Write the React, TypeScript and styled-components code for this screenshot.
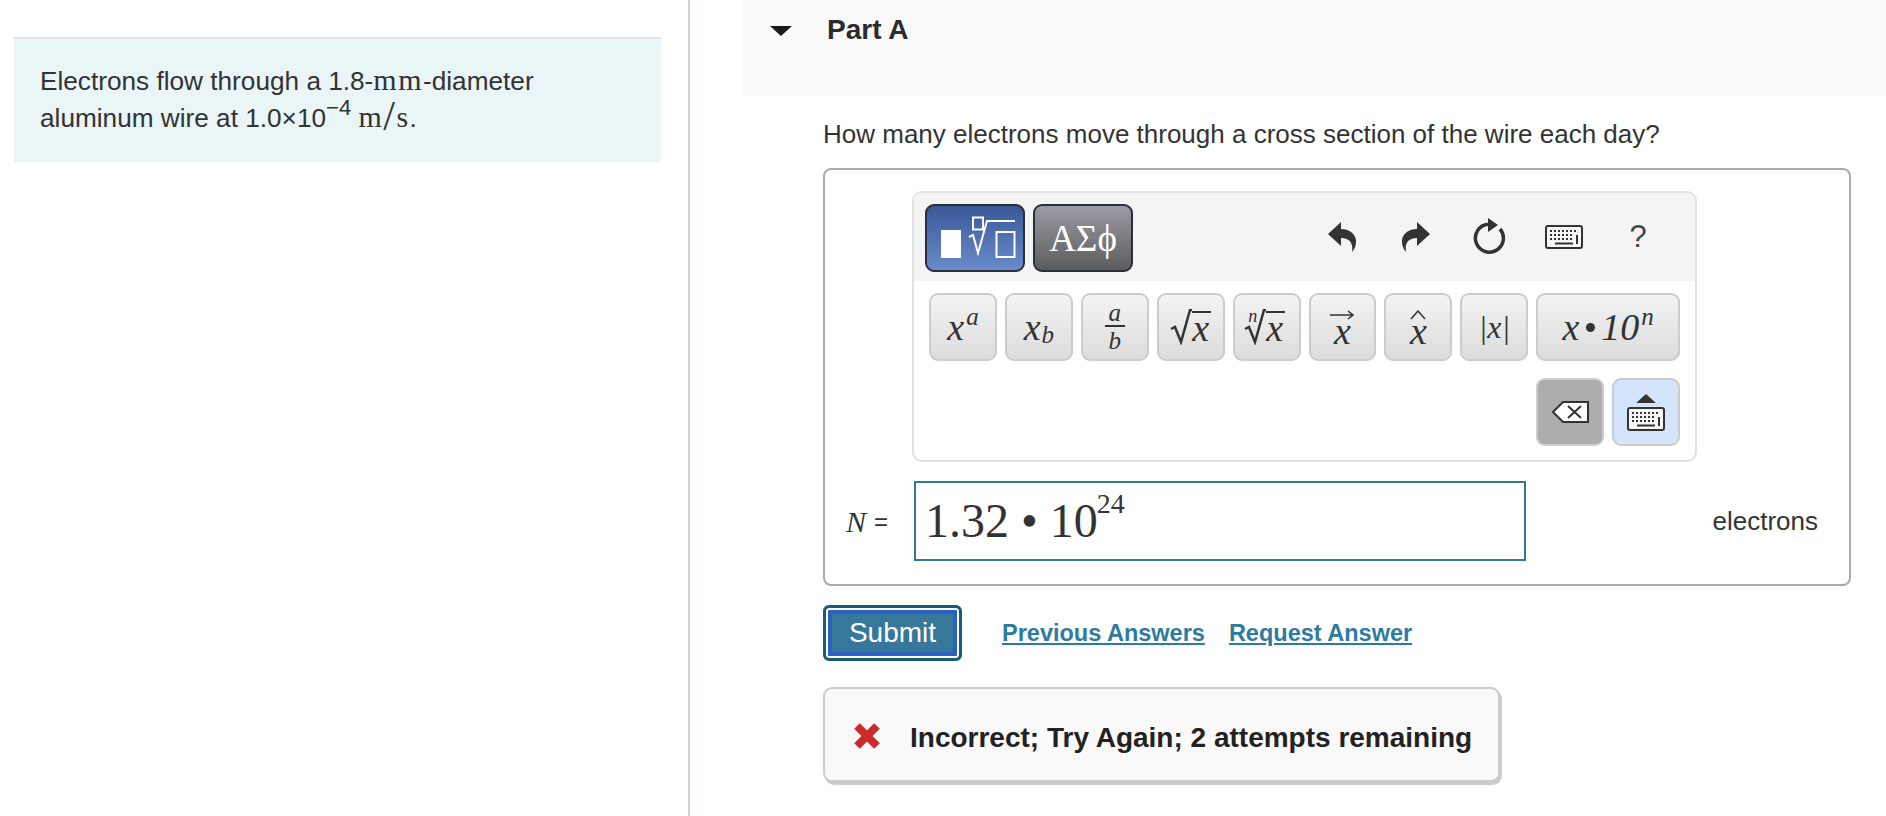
import React from "react";
import styled, { createGlobalStyle } from "styled-components";

const GlobalStyle = createGlobalStyle`
  html, body {
    margin: 0;
    padding: 0;
    background: #fff;
    font-family: "Liberation Sans", Arial, sans-serif;
    color: #333;
  }
  * { box-sizing: border-box; }
`;

const serif = `"Liberation Serif", "Times New Roman", serif`;

const Page = styled.div`
  display: flex;
  width: 1886px;
  height: 816px;
  overflow: hidden;
`;

const LeftColumn = styled.aside`
  width: 690px;
  flex: none;
  padding: 37px 27px 0 14px;
  border-right: 2px solid #c6d2e0;
`;

const ProblemBox = styled.div`
  height: 125px;
  padding: 24px 20px 0 26px;
  background: #e9f5f7;
  border-top: 2px solid #dde3e6;
  font-size: 26.2px;
  line-height: 37px;
  color: #333;
`;

const MathRoman = styled.span`
  font-family: ${serif};
  font-size: 30px;
  letter-spacing: 1.5px;
  line-height: 0;
`;

const Slash = styled.span`
  font-size: 42px;
  font-weight: 100;
  line-height: 0;
  vertical-align: -3px;
`;

const Exponent = styled.sup`
  font-size: 22px;
  line-height: 0;
  vertical-align: 12px;
`;

const RightColumn = styled.main`
  flex: 1;
  padding-left: 52px;
`;

const PartHeader = styled.header`
  display: flex;
  align-items: flex-start;
  height: 96px;
  background: #f9f9f9;
  padding: 15px 0 0 28px;
`;

const Caret = styled.span`
  width: 0;
  height: 0;
  margin-top: 11px;
  border-left: 11px solid transparent;
  border-right: 11px solid transparent;
  border-top: 10px solid #1a1a1a;
`;

const PartTitle = styled.h2`
  margin: 0 0 0 35px;
  font-size: 28px;
  line-height: 30px;
  font-weight: 700;
  color: #2b2b2b;
`;

const Body = styled.div`
  padding: 22px 35px 0 81px;
`;

const Question = styled.p`
  margin: 0 0 18px;
  font-size: 26px;
  line-height: 32px;
  color: #333;
`;

const AnswerBox = styled.section`
  height: 418px;
  padding: 21px 29px 0 87px;
  border: 2px solid #aaa;
  border-radius: 8px;
`;

const Toolbar = styled.div`
  width: 785px;
  height: 271px;
  border: 2px solid #e1e1e1;
  border-radius: 10px;
  overflow: hidden;
`;

const ToolbarTop = styled.div`
  display: flex;
  align-items: flex-start;
  height: 88px;
  padding: 11px 20px 0 11px;
  background: #f4f4f4;
`;

const ModeButton = styled.div<{ $active?: boolean }>`
  display: flex;
  align-items: center;
  justify-content: center;
  width: 100px;
  height: 68px;
  margin-right: 8px;
  border: 2px solid #2a2f38;
  border-radius: 9px;
  background: ${({ $active }) =>
    $active
      ? "linear-gradient(#3a5898, #6a8bcb)"
      : "linear-gradient(#9b9ba4, #5c5c5c)"};
  color: #fff;
  font-family: ${serif};
  font-size: 37px;
`;

const ToolIcons = styled.div`
  display: flex;
  margin: 13px 0 0 auto;
`;

const ToolIcon = styled.span<{ $size?: number }>`
  display: flex;
  align-items: center;
  justify-content: center;
  width: 74px;
  height: 40px;
  color: #444;
  font-size: ${({ $size }) => $size ?? 30}px;
`;

const ArrowSvg = styled.svg<{ $flip?: boolean }>`
  transform: ${({ $flip }) => ($flip ? "scaleX(-1)" : "none")};
`;

const Keys = styled.div`
  padding: 12px 15px 0;
`;

const KeyRow = styled.div<{ $end?: boolean }>`
  display: flex;
  gap: 8px;
  justify-content: ${({ $end }) => ($end ? "flex-end" : "flex-start")};
  margin-bottom: 17px;
`;

const Key = styled.div<{ $wide?: boolean; $tone?: "plain" | "dark" | "blue" }>`
  display: flex;
  align-items: center;
  justify-content: center;
  width: ${({ $wide }) => ($wide ? 144 : 68)}px;
  height: 68px;
  border: 2px solid #ccc;
  border-radius: 9px;
  background: ${({ $tone }) =>
    $tone === "dark"
      ? "#adadad"
      : $tone === "blue"
        ? "#d3e4fb"
        : "linear-gradient(#f3f3f3, #dcdcdc)"};
  color: #333;
  font-family: ${serif};
  font-size: 38px;
  font-style: italic;
`;

const KeySup = styled.span`
  font-size: 25px;
  transform: translateY(-10px);
  margin-left: 2px;
`;

const KeySub = styled.span`
  font-size: 25px;
  transform: translateY(8px);
  margin-left: 1px;
`;

const Fraction = styled.div`
  display: flex;
  flex-direction: column;
  align-items: center;
  font-size: 25px;
  line-height: 22px;
`;

const FractionBar = styled.span`
  width: 20px;
  height: 2px;
  margin: 1px 0 3px;
  background: #333;
`;

const RootText = styled.span`
  border-top: 2px solid #333;
  font-size: 38px;
  line-height: 30px;
  height: 31px;
  padding: 0 2px 0 0;
  margin-top: -1px;
`;

const RootIndex = styled.span`
  font-size: 18px;
  line-height: 16px;
  margin-right: -13px;
  transform: translateY(-11px);
`;

const Accented = styled.div`
  display: flex;
  flex-direction: column;
  align-items: center;
  line-height: 26px;
`;

const AccentSvg = styled.svg`
  display: block;
  margin-bottom: -2px;
`;

const AbsText = styled.span`
  font-size: 32px;
`;

const Dot = styled.span`
  width: 9px;
  height: 9px;
  margin: 0 6px 0 7px;
  border-radius: 50%;
  background: #333;
`;

const Stack = styled.div`
  display: flex;
  flex-direction: column;
  align-items: center;
  gap: 4px;
`;

const InputRow = styled.div`
  display: flex;
  align-items: center;
  margin: 19px -29px 0 -87px;
  padding: 0 31px 0 21px;
`;

const VarLabel = styled.span`
  display: flex;
  align-items: center;
  gap: 8px;
  width: 68px;
  padding-top: 2px;
  font-size: 24px;
`;

const VarName = styled.span`
  font-family: ${serif};
  font-style: italic;
  font-size: 30px;
`;

const MathInput = styled.div`
  width: 612px;
  height: 80px;
  padding: 0 0 0 9px;
  border: 2px solid #37789a;
  font-family: ${serif};
  font-size: 48px;
  line-height: 76px;
  color: #333;
`;

const InputSup = styled.sup`
  font-size: 28px;
  line-height: 0;
  vertical-align: 24px;
  margin-left: -1px;
`;

const Units = styled.span`
  margin-left: auto;
  font-size: 26px;
  color: #333;
`;

const ActionRow = styled.div`
  display: flex;
  align-items: center;
  margin-top: 19px;
`;

const SubmitButton = styled.button`
  width: 139px;
  height: 56px;
  padding: 0;
  border: 3px solid #1d5a78;
  border-radius: 6px;
  background: #37789a;
  box-shadow: inset 0 0 0 2px #fff, inset 0 0 0 6px #2a5fc4;
  color: #fff;
  font-family: inherit;
  font-size: 28px;
`;

const Links = styled.div`
  display: flex;
  gap: 24px;
  margin-left: 40px;
`;

const ActionLink = styled.a`
  font-size: 23.5px;
  font-weight: 700;
  color: #2f7aa0;
  text-decoration: underline;
`;

const Feedback = styled.div`
  display: flex;
  align-items: center;
  width: 677px;
  height: 95px;
  margin-top: 26px;
  padding-left: 27px;
  background: #f9f9f9;
  border: 2px solid #ccc;
  border-radius: 9px;
  box-shadow: 2px 3px 0 #ccc;
`;

const FeedbackIcon = styled.svg`
  margin-top: 2px;
`;

const FeedbackText = styled.strong`
  margin-left: 28px;
  padding-top: 6px;
  font-size: 28px;
  color: #222;
`;

const Radical = ({ width = 22 }: { width?: number }) => (
  <svg width={width} height="36" viewBox="0 0 22 36" fill="none" stroke="#333">
    <path d="M1 20 L5 18 L11 33 L20 1 L22 1" strokeWidth="2.500" />
  </svg>
);

const Keyboard = ({ width = 38 }: { width?: number }) => (
  <svg width={width} height={(width * 24) / 38} viewBox="0 0 38 24">
    <rect x="1" y="1" width="36" height="22" rx="2" fill="#f6f6f6" stroke="#333" strokeWidth="2" />
    <path
      d="M5 6h28M5 10h24M5 14h24"
      stroke="#333"
      strokeWidth="2"
      strokeDasharray="2 2"
      fill="none"
    />
    <path d="M10 18.500h18" stroke="#333" strokeWidth="2" />
    <path d="M31 10h2v9h-2z" fill="#333" />
  </svg>
);

const ReplyArrow = ({ flip }: { flip?: boolean }) => (
  <ArrowSvg $flip={flip} width="28" height="32" viewBox="0 0 28 32" fill="#333">
    <path d="M0 13 L13 1 V8 C22 8 29 14 28 22 C27.500 26 26 29 24 31 C25 25 24 17 13 17 V25 Z" />
  </ArrowSvg>
);

const App = () => (
  <>
    <GlobalStyle />
    <Page>
      <LeftColumn>
        <ProblemBox>
          Electrons flow through a 1.8-<MathRoman>mm</MathRoman>-diameter
          <br />
          aluminum wire at 1.0×10<Exponent>−4</Exponent>{" "}
          <MathRoman>
            m<Slash>/</Slash>s
          </MathRoman>
          .
        </ProblemBox>
      </LeftColumn>
      <RightColumn>
        <PartHeader>
          <Caret />
          <PartTitle>Part A</PartTitle>
        </PartHeader>
        <Body>
          <Question>
            How many electrons move through a cross section of the wire each day?
          </Question>
          <AnswerBox>
            <Toolbar>
              <ToolbarTop>
                <ModeButton $active>
                  <svg width="96" height="64" viewBox="0 0 96 64" fill="none">
                    <rect x="14" y="24" width="20" height="28" fill="#fff" />
                    <rect x="46" y="11.500" width="10" height="12" stroke="#fff" strokeWidth="2" />
                    <path d="M42 31 L46 29 L51 47 L60 15 L88 15" stroke="#fff" strokeWidth="2" />
                    <rect x="69.500" y="26" width="18" height="25" stroke="#fff" strokeWidth="2" />
                  </svg>
                </ModeButton>
                <ModeButton>ΑΣϕ</ModeButton>
                <ToolIcons>
                  <ToolIcon>
                    <ReplyArrow />
                  </ToolIcon>
                  <ToolIcon>
                    <ReplyArrow flip />
                  </ToolIcon>
                  <ToolIcon>
                    <svg width="34" height="38" viewBox="0 0 34 38" fill="none">
                      <path d="M27 11 A14 14 0 1 1 15 6.200" stroke="#333" strokeWidth="3.500" />
                      <path d="M15 0 L25 7 L15 14 Z" fill="#333" />
                    </svg>
                  </ToolIcon>
                  <ToolIcon>
                    <Keyboard />
                  </ToolIcon>
                  <ToolIcon $size={31}>?</ToolIcon>
                </ToolIcons>
              </ToolbarTop>
              <Keys>
                <KeyRow>
                  <Key>
                    x<KeySup>a</KeySup>
                  </Key>
                  <Key>
                    x<KeySub>b</KeySub>
                  </Key>
                  <Key>
                    <Fraction>
                      a
                      <FractionBar />
                      b
                    </Fraction>
                  </Key>
                  <Key>
                    <Radical />
                    <RootText>x</RootText>
                  </Key>
                  <Key>
                    <RootIndex>n</RootIndex>
                    <Radical />
                    <RootText>x</RootText>
                  </Key>
                  <Key>
                    <Accented>
                      <AccentSvg width="24" height="10" viewBox="0 0 24 10" fill="none" stroke="#333" strokeWidth="1.500">
                        <path d="M0 5h23M18 1l5 4-5 4" />
                      </AccentSvg>
                      x
                    </Accented>
                  </Key>
                  <Key>
                    <Accented>
                      <AccentSvg width="16" height="10" viewBox="0 0 16 10" fill="none" stroke="#333" strokeWidth="1.500">
                        <path d="M1 9l7-8 7 8" />
                      </AccentSvg>
                      x
                    </Accented>
                  </Key>
                  <Key>
                    <AbsText>|x|</AbsText>
                  </Key>
                  <Key $wide>
                    x<Dot />
                    10
                    <KeySup>n</KeySup>
                  </Key>
                </KeyRow>
                <KeyRow $end>
                  <Key $tone="dark">
                    <svg width="38" height="24" viewBox="0 0 38 24" fill="#fff" stroke="#333" strokeWidth="2">
                      <path d="M37 2H12L2 12l10 10h25z" />
                      <path d="M17 6l13 12M30 6L17 18" fill="none" />
                    </svg>
                  </Key>
                  <Key $tone="blue">
                    <Stack>
                      <svg width="20" height="9" viewBox="0 0 22 10">
                        <path d="M11 0l11 10H0z" fill="#333" />
                      </svg>
                      <Keyboard />
                    </Stack>
                  </Key>
                </KeyRow>
              </Keys>
            </Toolbar>
            <InputRow>
              <VarLabel>
                <VarName>N</VarName>=
              </VarLabel>
              <MathInput>
                1.32 • 10<InputSup>24</InputSup>
              </MathInput>
              <Units>electrons</Units>
            </InputRow>
          </AnswerBox>
          <ActionRow>
            <SubmitButton>Submit</SubmitButton>
            <Links>
              <ActionLink>Previous Answers</ActionLink>
              <ActionLink>Request Answer</ActionLink>
            </Links>
          </ActionRow>
          <Feedback>
            <FeedbackIcon width="30" height="30" viewBox="0 0 30 30" fill="none" stroke="#cc2a2a" strokeWidth="8">
              <path d="M5 5l20 20M25 5L5 25" />
            </FeedbackIcon>
            <FeedbackText>Incorrect; Try Again; 2 attempts remaining</FeedbackText>
          </Feedback>
        </Body>
      </RightColumn>
    </Page>
  </>
);

export default App;
